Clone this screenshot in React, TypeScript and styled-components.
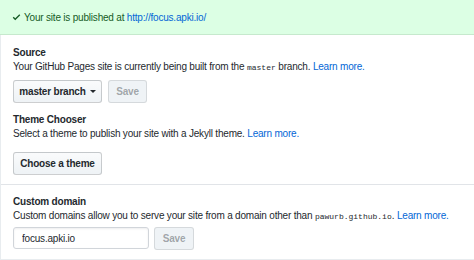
import React from 'react';
import styled, { createGlobalStyle } from 'styled-components';

const GlobalStyle = createGlobalStyle`
  html, body {
    margin: 0;
    padding: 0;
    background: #ffffff;
  }
  body {
    font-family: "Liberation Sans", Arial, sans-serif;
    font-size: 10px;
    letter-spacing: -0.2px;
    color: #24292e;
    -webkit-font-smoothing: antialiased;
  }
`;

const Page = styled.div`
  width: 474px;
  height: 260px;
  overflow: hidden;
  display: flex;
  flex-direction: column;
`;

const Flash = styled.div`
  height: 35px;
  box-sizing: border-box;
  display: flex;
  align-items: center;
  gap: 3px;
  padding: 0 12px;
  background: #dcffe4;
  border-bottom: 1px solid #c6e9cd;
  color: #165c26;
`;

const Box = styled.div`
  flex: 1;
  border-left: 1px solid #e8ecef;
  border-bottom: 1px solid #e8ecef;
  display: flex;
  flex-direction: column;
`;

const Section = styled.div<{ $last?: boolean }>`
  padding: ${p => (p.$last ? '10px 12px 0' : '11px 12px 9px')};
  border-bottom: ${p => (p.$last ? 'none' : '1px solid #e1e4e8')};
  flex: ${p => (p.$last ? 1 : 'none')};
`;

const Group = styled.div`
  & + & {
    margin-top: 10px;
  }
`;

const Title = styled.div`
  font-weight: bold;
  line-height: 14px;
`;

const Note = styled.div`
  line-height: 14px;
`;

const Link = styled.a`
  color: #0366d6;
  text-decoration: none;
`;

const Code = styled.code`
  font-family: "Liberation Mono", "DejaVu Sans Mono", monospace;
  font-size: 8px;
  letter-spacing: 0;
`;

const Actions = styled.div<{ $gap: number; $top: number }>`
  display: flex;
  gap: ${p => p.$gap}px;
  margin-top: ${p => p.$top}px;
`;

const Button = styled.button<{ $w: number }>`
  width: ${p => p.$w}px;
  height: 23px;
  box-sizing: border-box;
  padding: 0;
  font-family: inherit;
  font-size: 10px;
  letter-spacing: -0.2px;
  font-weight: bold;
  color: #24292e;
  background: linear-gradient(#fafbfc, #eff3f6 90%);
  border: 1px solid rgba(27, 31, 35, 0.2);
  border-radius: 3px;
  display: flex;
  align-items: center;
  justify-content: center;
  gap: 4px;

  &:disabled {
    color: rgba(36, 41, 46, 0.4);
    background: #eff3f6;
    border-color: rgba(27, 31, 35, 0.12);
  }
`;

const Caret = styled.span`
  width: 0;
  height: 0;
  border-left: 3px solid transparent;
  border-right: 3px solid transparent;
  border-top: 3px solid #24292e;
`;

const Input = styled.input`
  width: 136px;
  height: 22px;
  box-sizing: border-box;
  padding: 0 8px;
  font-family: inherit;
  font-size: 10px;
  letter-spacing: -0.2px;
  color: #24292e;
  border: 1px solid #d1d5da;
  border-radius: 3px;
  box-shadow: inset 0 1px 2px rgba(27, 31, 35, 0.075);
  outline: none;
`;

const Check = () => (
  <svg width="9" height="10" viewBox="0 0 12 16" fill="#165c26">
    <path d="M12 5l-8 8-4-4 1.5-1.5L4 10l6.5-6.5L12 5z" />
  </svg>
);

export default function App() {
  return (
    <Page>
      <GlobalStyle />
      <Flash>
        <Check />
        <span>
          Your site is published at <Link href="#">http://focus.apki.io/</Link>
        </span>
      </Flash>
      <Box>
        <Section>
          <Group>
            <Title>Source</Title>
            <Note>
              Your GitHub Pages site is currently being built from the <Code>master</Code> branch.{' '}
              <Link href="#">Learn more.</Link>
            </Note>
            <Actions $gap={6} $top={5}>
              <Button $w={89}>
                master branch <Caret />
              </Button>
              <Button $w={39} disabled>
                Save
              </Button>
            </Actions>
          </Group>
          <Group>
            <Title>Theme Chooser</Title>
            <Note>
              Select a theme to publish your site with a Jekyll theme. <Link href="#">Learn more.</Link>
            </Note>
            <Actions $gap={6} $top={11}>
              <Button $w={89}>Choose a theme</Button>
            </Actions>
          </Group>
        </Section>
        <Section $last>
          <Title>Custom domain</Title>
          <Note>
            Custom domains allow you to serve your site from a domain other than <Code>pawurb.github.io</Code>.{' '}
            <Link href="#">Learn more.</Link>
          </Note>
          <Actions $gap={5} $top={3}>
            <Input defaultValue="focus.apki.io" />
            <Button $w={40} disabled>
              Save
            </Button>
          </Actions>
        </Section>
      </Box>
    </Page>
  );
}
